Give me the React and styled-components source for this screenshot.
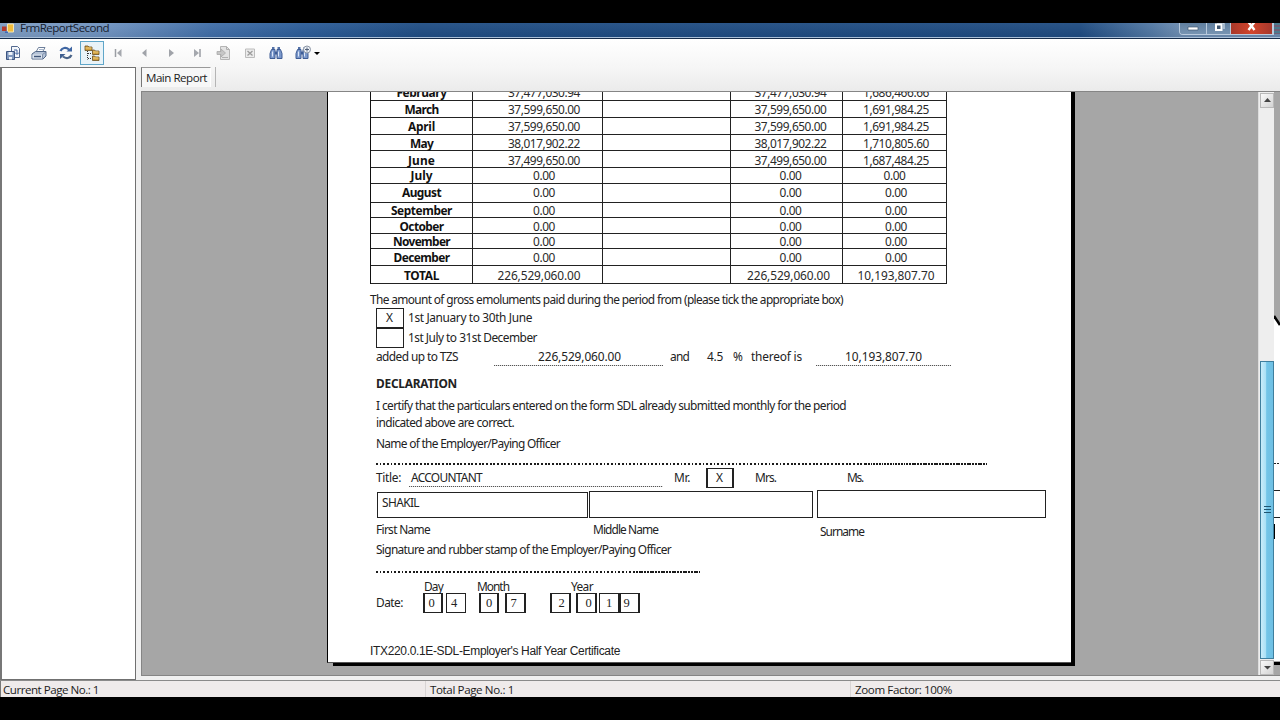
import React, { useLayoutEffect, useRef } from "react";
import styled, { createGlobalStyle } from "styled-components";

const GlobalStyle = createGlobalStyle`
  * {
    box-sizing: border-box;
  }
  body {
    margin: 0;
    background: #000;
  }
`;

const Screen = styled.div`
  width: 1280px;
  height: 720px;
  padding: 23px 0;
  background: #000;
  overflow: hidden;
  display: flex;
  flex-direction: column;
  font-family: "Open Sans", "Noto Sans", sans-serif;
  font-size: 11.6px;
  color: #1c1c1c;
`;

/* title bar */

const TitleBar = styled.div`
  display: flex;
  align-items: flex-start;
  flex: none;
  height: 16px;
  padding-left: 2px;
  background: linear-gradient(180deg, rgba(255, 255, 255, 0.06), rgba(0, 0, 0, 0.06)),
    linear-gradient(90deg, #7d9cc2 0, #6d91bf 110px, #3f6da7 210px, #2b5c98 300px, #1e4c83 420px, #1d4a80 1080px, #4f76a2 1150px, #6b8bb0 1180px);
  border-bottom: 1px solid #152c4a;
  box-shadow: inset 0 -1px 0 #a9bfd8;
`;

const Title = styled.div`
  height: 12px;
  margin-left: 5px;
  line-height: 10px;
  color: #16202e;
`;

const WindowButtons = styled.div`
  display: flex;
  height: 12px;
  margin-left: auto;
  border: 1px solid #b9cadd;
  border-top: 0;
  border-radius: 0 0 0 4px;
  overflow: hidden;
`;

const WindowButton = styled.div`
  display: flex;
  justify-content: center;
  width: ${(p) => p.$width}px;
  background: ${(p) =>
    p.$close
      ? "linear-gradient(90deg, #a8382a, #d2452c 50%, #a5382d)"
      : "linear-gradient(180deg, #607f9f, #7794b2)"};
  border-right: 1px solid #b9cadd;
`;

const TitleEdge = styled.div`
  width: 6px;
  height: 11px;
  background: repeating-linear-gradient(180deg, #4b7a8e 0 2px, #6f5f77 2px 4px);
`;

/* toolbar */

const Toolbar = styled.div`
  display: flex;
  align-items: center;
  flex: none;
  height: 28px;
  padding-left: 1px;
  background: linear-gradient(180deg, #fff, #f6f6f6);
`;

const ToolButton = styled.div`
  display: flex;
  align-items: center;
  justify-content: center;
  width: 24px;
  height: 24px;
  margin-right: 2.35px;
  border: 1px solid ${(p) => (p.$active ? "#5fa6c9" : "transparent")};
  background: ${(p) => (p.$active ? "#e9f3f8" : "transparent")};
`;

const DropArrow = styled.div`
  margin-left: -3px;
  border: 3px solid transparent;
  border-top-color: #000;
  border-bottom: 0;
`;

/* body */

const Body = styled.div`
  display: flex;
  flex: none;
  height: 613px;
  background: #f0f0f0;
`;

const TreePane = styled.div`
  flex: none;
  width: 136px;
  background: #fff;
  border: 1px solid #707070;
  border-left: 2px solid #777;
`;

const Viewer = styled.div`
  flex: 1;
  min-width: 0;
  margin-left: 5px;
  display: flex;
  flex-direction: column;
`;

const TabStrip = styled.div`
  display: flex;
  flex: none;
  height: 24px;
  background: linear-gradient(180deg, #f6f6f6, #ebebeb);
`;

const Tab = styled.div`
  width: 70px;
  height: 20px;
  padding-left: 4px;
  line-height: 19px;
  background: #f7f7f7;
  border-left: 1px solid #777;
  border-top: 1px solid #999;
  border-right: 1px solid #fff;
`;

const TabDivider = styled.div`
  width: 1px;
  height: 20px;
  margin-left: 4px;
  background: #b5b5b5;
`;

const Viewport = styled.div`
  display: flex;
  height: 585px;
  background: #a6a6a6;
  border: 1px solid #858585;
  border-right: 0;
  overflow: hidden;
`;

const PaperFrame = styled.div`
  display: flex;
  flex: none;
  width: 1116px;
  padding-left: 185px;
  height: 583px;
`;

const Paper = styled.div`
  width: 744px;
  height: 571px;
  background: #fff;
  border-left: 1px solid #000;
  border-bottom: 1px solid #555;
  box-shadow: 4px 0 0 #000, 4px 3px 0 #000;
  clip-path: polygon(0 0, calc(100% + 4px) 0, calc(100% + 4px) calc(100% + 3px), 6px calc(100% + 3px), 6px 100%, 0 100%);
  font-family: "Noto Sans", "DejaVu Sans Condensed", sans-serif;
  font-size: 11.9px;
  color: #222;
`;

/* report table */

const Table = styled.div`
  width: 577px;
  margin-left: 42px;
  border-left: 1px solid #111;
`;

const TableRow = styled.div`
  display: grid;
  grid-template-columns: 102px 130px 128px 112px 104px;
  height: ${(p) => p.$height}px;
`;

const Cell = styled.div`
  display: flex;
  justify-content: center;
  align-items: flex-start;
  padding-left: ${(p) => p.$shift || 0}px;
  border-right: 1px solid #222;
  border-bottom: 1px solid #222;
  line-height: 14px;
  font-weight: ${(p) => (p.$bold ? "bold" : "normal")};
  color: ${(p) => (p.$bold ? "#111" : "#2a2a2a")};

  & > span {
    margin-top: ${(p) => p.$drop}px;
  }
`;

/* form part of the report */

const Line = styled.div`
  display: flex;
  align-items: center;
  height: ${(p) => p.$height || 16}px;
  margin-top: ${(p) => p.$gap || 0}px;
  padding-left: ${(p) => p.$indent || 48}px;
  line-height: 16px;

  & > span {
    padding-bottom: 2px;
  }
`;

const FitText = styled.span`
  flex: none;
  white-space: pre;
  margin-left: ${(p) => p.$before || 0}px;
  padding-top: ${(p) => p.$lower || 0}px;
  font-weight: ${(p) => (p.$bold ? "bold" : "inherit")};
`;

const UnderlinedField = styled.div`
  display: flex;
  flex: none;
  height: 18px;
  width: ${(p) => p.$width}px;
  margin-left: ${(p) => p.$before}px;
  background: repeating-linear-gradient(90deg, #555 0 1px, #ddd 1px 2px) bottom / 100% 1px no-repeat;
`;

const Box = styled.div`
  display: flex;
  align-items: center;
  justify-content: center;
  flex: none;
  width: ${(p) => p.$width}px;
  height: ${(p) => p.$height}px;
  margin-left: ${(p) => p.$before || 0}px;
  border: 1px solid #222;
  border-width: ${(p) => p.$border || "1px"};
  font-family: ${(p) => (p.$serif ? '"Liberation Serif", serif' : "inherit")};
  font-size: ${(p) => (p.$serif ? "12.5px" : "inherit")};
  padding-left: ${(p) => p.$shift || 0}px;
  padding-right: ${(p) => p.$shiftLeft || 0}px;

  & > span {
    padding-bottom: 2px;
  }
`;

const NameBoxes = styled.div`
  display: flex;
  align-items: flex-end;
  height: 28px;
  margin-top: 2px;
  padding-left: 49px;
`;

const NameBox = styled.div`
  width: ${(p) => p.$width}px;
  height: ${(p) => p.$height}px;
  margin-left: ${(p) => p.$before || 0}px;
  padding: 1px 0 0 4px;
  line-height: 16px;
  border: 1px solid #222;
`;

const DotLeader = styled.div`
  display: flex;
  height: 2px;
  margin: ${(p) => p.$gap}px 0 0 48px;
`;

const Dots = styled.div`
  width: ${(p) => p.$width}px;
  background: repeating-linear-gradient(90deg, #1a1a1a 0 1.8px, #fff 1.8px ${(p) => p.$pitch}px);
`;

const Footer = styled.div`
  margin: 30px 0 0 42px;
  line-height: 16px;
  font-family: "Liberation Sans", Arial, sans-serif;
  font-size: 12px;
`;

/* scrollbar */

const Scrollbar = styled.div`
  display: flex;
  flex-direction: column;
  flex: none;
  width: 16px;
  padding: 1px 0 0 1px;
  background: #eee;
  border-left: 1px solid #ddd;
`;

const ScrollButton = styled.div`
  display: flex;
  align-items: center;
  justify-content: center;
  flex: none;
  height: 15px;
  background: linear-gradient(135deg, #fafafa, #d3d3d3);
  border: 1px solid #b9b9b9;
`;

const Thumb = styled.div`
  display: flex;
  align-items: center;
  justify-content: center;
  flex: none;
  height: 298px;
  margin: 253px 0 1px;
  background: linear-gradient(90deg, #c9edfb 0, #a7dff5 45%, #73c5e8 46%, #6fc0e4 100%);
  border: 1px solid #3f7f9e;
`;

const Edge = styled.div`
  flex: none;
  width: 6px;
`;

/* status bar */

const StatusBar = styled.div`
  display: grid;
  grid-template-columns: 425px 425px 1fr;
  flex: none;
  height: 17px;
  background: #efebeb;
  border-top: 1px solid #8a8a8a;
  line-height: 18px;
  overflow: hidden;
`;

const StatusCell = styled.div`
  padding-left: ${(p) => p.$pad}px;
  border-left: 1px solid ${(p) => (p.$first ? "#777" : "#d8d4d4")};
`;

function Fit({ width, children, ...rest }) {
  const ref = useRef(null);

  useLayoutEffect(() => {
    const el = ref.current;
    el.style.letterSpacing = "0px";
    const natural = el.getBoundingClientRect().width;
    const gap = (width - natural) / children.length;
    el.style.letterSpacing = `${gap}px`;
  }, [width, children]);

  return (
    <FitText ref={ref} {...rest}>
      {children}
    </FitText>
  );
}

const Icon = ({ children, width = 16 }) => (
  <svg width={width} height="16" viewBox={`0 0 ${width} 16`} fill="none">
    {children}
  </svg>
);

const ExportIcon = () => (
  <Icon>
    <path d="M6.5 1.5h6l2 2v9h-8z" fill="#f4f7fb" stroke="#53698f" />
    <path d="M9 5h3v4M10 7.500l2 2 2-2" stroke="#3c5f9c" />
    <path d="M1.500 6.500h8v8h-8z" fill="#7f97bd" stroke="#3d5581" />
    <path d="M3.500 7h4v3h-4zM4 12h3v2.500H4z" fill="#eef3f9" />
  </Icon>
);

const PrintIcon = () => (
  <Icon>
    <path d="M5 7l2.500-4.500h6.500L11.500 7z" fill="#fff" stroke="#6d7f9b" />
    <path d="M8 4.500h4" stroke="#a9b7cc" />
    <path d="M1 9l3.500-2.500H15V11l-3 3H1z" fill="#b4c2d6" stroke="#516788" />
    <path d="M1.500 9.500h10v4h-10z" fill="#dce4ee" />
    <path d="M3 11.500h7" stroke="#3f5579" strokeWidth="1.500" />
    <path d="M11.500 9.500L15 7M11.500 9.500v4" stroke="#6d7f9b" strokeWidth=".8" />
  </Icon>
);

const RefreshIcon = () => (
  <Icon>
    <path d="M2.500 6C4 2.500 8 2 11 4.500" stroke="#3f66a3" strokeWidth="2.200" />
    <path d="M8.500 6.500h5.500V1.500z" fill="#3f66a3" />
    <path d="M13.500 10c-1.500 3.500-5.500 4-8.500 1.500" stroke="#4a6488" strokeWidth="2.200" />
    <path d="M7.500 9H2v5z" fill="#3f5f90" />
  </Icon>
);

const TreeIcon = () => (
  <Icon>
    <path d="M3.500 6v8.500M4 8.500h4M4 13.500h4" stroke="#333" strokeDasharray="1 1" />
    <path d="M1 1h3l1 1h3v3.500H1zM8.500 5h2l1 1h3.500v3.500H8.500zM8.500 11h2l1 1h3.500v3.500H8.500z" fill="#cf9f3f" stroke="#6b4f20" strokeWidth=".8" />
    <path d="M1.500 3h6M9 7h5.500M9 13h5.500" stroke="#f0d080" />
  </Icon>
);

const FirstIcon = () => (
  <Icon>
    <path d="M5.500 4v8" stroke="#9a9da3" strokeWidth="1.500" />
    <path d="M11.500 4v8L7 8z" fill="#a5a8ae" />
  </Icon>
);

const PrevIcon = () => (
  <Icon>
    <path d="M9.500 4v8L5 8z" fill="#a0a3a9" />
  </Icon>
);

const NextIcon = () => (
  <Icon>
    <path d="M6 4v8l5-4z" fill="#a0a3a9" />
  </Icon>
);

const LastIcon = () => (
  <Icon>
    <path d="M5 4v8l5-4z" fill="#a5a8ae" />
    <path d="M11 4v8" stroke="#9a9da3" strokeWidth="1.500" />
  </Icon>
);

const GotoIcon = () => (
  <Icon>
    <path d="M4.500 1.500h6l3 3v10h-9z" fill="#e3e3e3" stroke="#b5b5b5" />
    <path d="M10.500 1.500v3h3M6 12.500h6" stroke="#b0b0b0" />
    <path d="M1 6.500h4V4l4.500 4L5 12V9.500H1z" fill="#c6c6c6" stroke="#a8a8a8" strokeWidth=".8" />
  </Icon>
);

const CloseViewIcon = () => (
  <Icon>
    <path d="M3.500 4h9v8.500h-9z" fill="#ececec" stroke="#bcbcbc" />
    <path d="M5.500 6l5 4.500M10.500 6l-5 4.500" stroke="#9c9c9c" strokeWidth="1.300" />
  </Icon>
);

const Binoculars = () => (
  <>
    <path d="M4 2h2.500v2.500H4zM9.500 2H12v2.500H9.500z" fill="#5372a8" />
    <path d="M3.500 4.500h3.500v9H2V8.500zM9 4.500h3.500l1.500 4v5H9z" fill="#7b98cb" stroke="#3f5d95" />
    <path d="M7 6.500h2v3H7z" fill="#3f5d95" />
    <path d="M4.500 6.500v5M10.500 6.500v5" stroke="#dce7f8" />
  </>
);

const FindIcon = () => (
  <Icon>
    <Binoculars />
  </Icon>
);

const ZoomIcon = () => (
  <Icon width={18}>
    <Binoculars />
    <circle cx="13" cy="4.500" r="3.500" fill="#edf1f6" stroke="#8a94a3" />
    <path d="M11 4.500h4M13 2.500v4" stroke="#526078" />
  </Icon>
);

const tools = [
  ExportIcon,
  PrintIcon,
  RefreshIcon,
  TreeIcon,
  FirstIcon,
  PrevIcon,
  NextIcon,
  LastIcon,
  GotoIcon,
  CloseViewIcon,
  FindIcon,
  ZoomIcon,
];

const rows = [
  { month: "February", mw: 50, h: 9, drop: -7, gross: "37,477,030.94", sdl: "1,686,466.66" },
  { month: "March", mw: 34, h: 17, drop: 1, gross: "37,599,650.00", sdl: "1,691,984.25" },
  { month: "April", mw: 27, h: 17, drop: 1, gross: "37,599,650.00", sdl: "1,691,984.25" },
  { month: "May", mw: 23, h: 16, drop: 1, gross: "38,017,902.22", sdl: "1,710,805.60" },
  { month: "June", mw: 27, h: 17, drop: 2, gross: "37,499,650.00", sdl: "1,687,484.25" },
  { month: "July", mw: 22, h: 16, drop: 0, gross: "0.00", sdl: "0.00" },
  { month: "August", mw: 39, h: 19, drop: 1, gross: "0.00", sdl: "0.00" },
  { month: "September", mw: 61, h: 15, drop: 0, gross: "0.00", sdl: "0.00" },
  { month: "October", mw: 44, h: 16, drop: 1, gross: "0.00", sdl: "0.00" },
  { month: "November", mw: 57, h: 15, drop: 0, gross: "0.00", sdl: "0.00" },
  { month: "December", mw: 56, h: 17, drop: 1, gross: "0.00", sdl: "0.00" },
  { month: "TOTAL", mw: 35, h: 18, drop: 2, gross: "226,529,060.00", sdl: "10,193,807.70", total: true },
];

function amountWidth(text, total) {
  if (text === "0.00") return 22;
  if (total) return text.length > 13 ? 83 : 77;
  return text.length > 12 ? 72 : 66;
}

function ReportTable() {
  return (
    <Table>
      {rows.map((r) => (
        <TableRow key={r.month} $height={r.h}>
          <Cell $bold $drop={r.drop}>
            <Fit width={r.mw}>{r.month}</Fit>
          </Cell>
          <Cell $drop={r.drop} $shift={r.total ? 3 : 13}>
            <Fit width={amountWidth(r.gross, r.total)}>{r.gross}</Fit>
          </Cell>
          <Cell />
          <Cell $drop={r.drop} $shift={r.total ? 4 : 8}>
            <Fit width={amountWidth(r.gross, r.total)}>{r.gross}</Fit>
          </Cell>
          <Cell $drop={r.drop} $shift={r.month === "July" ? 0 : 3}>
            <Fit width={amountWidth(r.sdl, r.total)}>{r.sdl}</Fit>
          </Cell>
        </TableRow>
      ))}
    </Table>
  );
}

function ReportForm() {
  return (
    <>
      <Line $gap={8} $indent={42}>
        <Fit width={473}>The amount of gross emoluments paid during the period from (please tick the appropriate box)</Fit>
      </Line>
      <Line $height={20} $indent={48}>
        <Box $width={28} $height={20}>
          <Fit width={8}>X</Fit>
        </Box>
        <Fit width={124} $before={4}>1st January to 30th June</Fit>
      </Line>
      <Line $height={20} $indent={48}>
        <Box $width={28} $height={20} />
        <Fit width={129} $before={4}>1st July to 31st December</Fit>
      </Line>
      <Line $height={18}>
        <Fit width={82}>added up to TZS</Fit>
        <UnderlinedField $width={169} $before={36}>
          <Fit width={83} $before={44}>226,529,060.00</Fit>
        </UnderlinedField>
        <Fit width={19} $before={7}>and</Fit>
        <Fit width={16} $before={18}>4.5</Fit>
        <Fit width={11} $before={10}>%</Fit>
        <Fit width={51} $before={7}>thereof is</Fit>
        <UnderlinedField $width={135} $before={14}>
          <Fit width={77} $before={29}>10,193,807.70</Fit>
        </UnderlinedField>
      </Line>
      <Line $gap={9}>
        <Fit width={81} $bold $lower={1}>DECLARATION</Fit>
      </Line>
      <Line $gap={7}>
        <Fit width={470}>I certify that the particulars entered on the form SDL already submitted monthly for the period</Fit>
      </Line>
      <Line $gap={1}>
        <Fit width={138}>indicated above are correct.</Fit>
      </Line>
      <Line $gap={5}>
        <Fit width={184}>Name of the Employer/Paying Officer</Fit>
      </Line>
      <DotLeader $gap={11}>
        <Dots $width={489} $pitch={3.67} />
        <Dots $width={122} $pitch={2.75} />
      </DotLeader>
      <Line $height={20} $gap={3}>
        <Fit width={25}>Title:</Fit>
        <UnderlinedField $width={254} $before={8}>
          <Fit width={71} $before={2}>ACCOUNTANT</Fit>
        </UnderlinedField>
        <Fit width={16} $before={11}>Mr.</Fit>
        <Box $width={28} $height={20} $before={16} $border="1px 2px">
          <Fit width={8}>X</Fit>
        </Box>
        <Fit width={21} $before={21}>Mrs.</Fit>
        <Fit width={16} $before={71}>Ms.</Fit>
      </Line>
      <NameBoxes>
        <NameBox $width={211} $height={26}>
          <Fit width={37}>SHAKIL</Fit>
        </NameBox>
        <NameBox $width={224} $height={27} $before={1} />
        <NameBox $width={229} $height={28} $before={4} />
      </NameBoxes>
      <Line $gap={4}>
        <Fit width={54}>First Name</Fit>
        <Fit width={65} $before={163}>Middle Name</Fit>
        <Fit width={44} $before={162} $lower={4}>Surname</Fit>
      </Line>
      <Line $gap={4}>
        <Fit width={295}>Signature and rubber stamp of the Employer/Paying Officer</Fit>
      </Line>
      <DotLeader $gap={13}>
        <Dots $width={260} $pitch={3.67} />
        <Dots $width={64} $pitch={2.75} />
      </DotLeader>
      <Line $gap={6} $indent={96}>
        <Fit width={19}>Day</Fit>
        <Fit width={32} $before={34}>Month</Fit>
        <Fit width={22} $before={62}>Year</Fit>
      </Line>
      <Line $height={20} $gap={-2}>
        <Fit width={27}>Date:</Fit>
        <Box $serif $width={20} $height={20} $before={20} $border="1px 2px" $shiftLeft={3}>0</Box>
        <Box $serif $width={20} $height={20} $before={3} $shiftLeft={4}>4</Box>
        <Box $serif $width={20} $height={20} $before={13} $border="1px 2px">0</Box>
        <Box $serif $width={21} $height={20} $before={6} $border="1px 2px" $shiftLeft={4}>7</Box>
        <Box $serif $width={21} $height={20} $before={24} $border="1px 2px" $shift={2}>2</Box>
        <Box $serif $width={21} $height={20} $before={5} $border="1px 2px" $shift={4}>0</Box>
        <Box $serif $width={21} $height={20} $before={2} $border="1px 2px 1px 1px">1</Box>
        <Box $serif $width={20} $height={20} $border="1px 2px 1px 1px" $shiftLeft={6}>9</Box>
      </Line>
      <Footer>
        <Fit width={250}>ITX220.0.1E-SDL-Employer's Half Year Certificate</Fit>
      </Footer>
    </>
  );
}

export default function App() {
  return (
    <>
      <GlobalStyle />
      <Screen>
        <TitleBar>
          <svg width="13" height="12" viewBox="0 0 13 12">
            <path d="M0 3.500h4.500V8H0z" fill="#b5392b" />
            <path d="M5.500 1h6v8h-6z" fill="#f0bd3d" stroke="#f5e6b5" />
            <path d="M3 8.500h3V10H3z" fill="#3f68b8" />
          </svg>
          <Title>
            <Fit width={89}>FrmReportSecond</Fit>
          </Title>
          <WindowButtons>
            <WindowButton $width={27}>
              <svg width="12" height="11">
                <path d="M1 4h10v3H1z" fill="#fff" stroke="#3f5670" strokeWidth=".7" />
              </svg>
            </WindowButton>
            <WindowButton $width={24}>
              <svg width="12" height="11">
                <path d="M4 0h7v6" stroke="#e5ecf3" fill="none" />
                <path d="M3 1.500h5.500v5.500H3z" stroke="#fff" strokeWidth="2" fill="#3f5670" />
              </svg>
            </WindowButton>
            <WindowButton $width={42} $close>
              <svg width="12" height="11">
                <path d="M2.500-1l6 8M8.500-1l-6 8" stroke="#fff" strokeWidth="2.400" />
              </svg>
            </WindowButton>
          </WindowButtons>
          <TitleEdge />
        </TitleBar>
        <Toolbar>
          {tools.map((Tool, i) => (
            <ToolButton key={i} $active={Tool === TreeIcon}>
              <Tool />
            </ToolButton>
          ))}
          <DropArrow />
        </Toolbar>
        <Body>
          <TreePane />
          <Viewer>
            <TabStrip>
              <Tab>
                <Fit width={61}>Main Report</Fit>
              </Tab>
              <TabDivider />
            </TabStrip>
            <Viewport>
              <PaperFrame>
                <Paper>
                  <ReportTable />
                  <ReportForm />
                </Paper>
              </PaperFrame>
              <Scrollbar>
                <ScrollButton>
                  <svg width="7" height="5">
                    <path d="M0 4l3.500-4L7 4z" fill="#444" />
                  </svg>
                </ScrollButton>
                <Thumb>
                  <svg width="7" height="8">
                    <path d="M0 .5h7M0 3.500h7M0 6.500h7" stroke="#1f5672" strokeWidth="1.200" />
                  </svg>
                </Thumb>
                <ScrollButton>
                  <svg width="7" height="5">
                    <path d="M0 1l3.500 3.500L7 1z" fill="#444" />
                  </svg>
                </ScrollButton>
              </Scrollbar>
              <Edge>
                <svg width="6" height="583" viewBox="0 0 6 583" display="block">
                  <path d="M0 224l6 9v336H0z" fill="#fff" />
                  <path d="M0 224l6 9" stroke="#000" strokeWidth="2.500" />
                  <path d="M0 371.500h6" stroke="#222" strokeDasharray="2 1" />
                  <path d="M0 398.500h6M0 425.500h6" stroke="#222" />
                  <path d="M0 432v15" stroke="#000" strokeWidth="2" />
                  <path d="M0 571.500h6" stroke="#000" strokeWidth="3" />
                </svg>
              </Edge>
            </Viewport>
          </Viewer>
        </Body>
        <StatusBar>
          <StatusCell $first $pad={2}>
            <Fit width={96}>Current Page No.: 1</Fit>
          </StatusCell>
          <StatusCell $pad={4}>
            <Fit width={84}>Total Page No.: 1</Fit>
          </StatusCell>
          <StatusCell $pad={4}>
            <Fit width={97}>Zoom Factor: 100%</Fit>
          </StatusCell>
        </StatusBar>
      </Screen>
    </>
  );
}
